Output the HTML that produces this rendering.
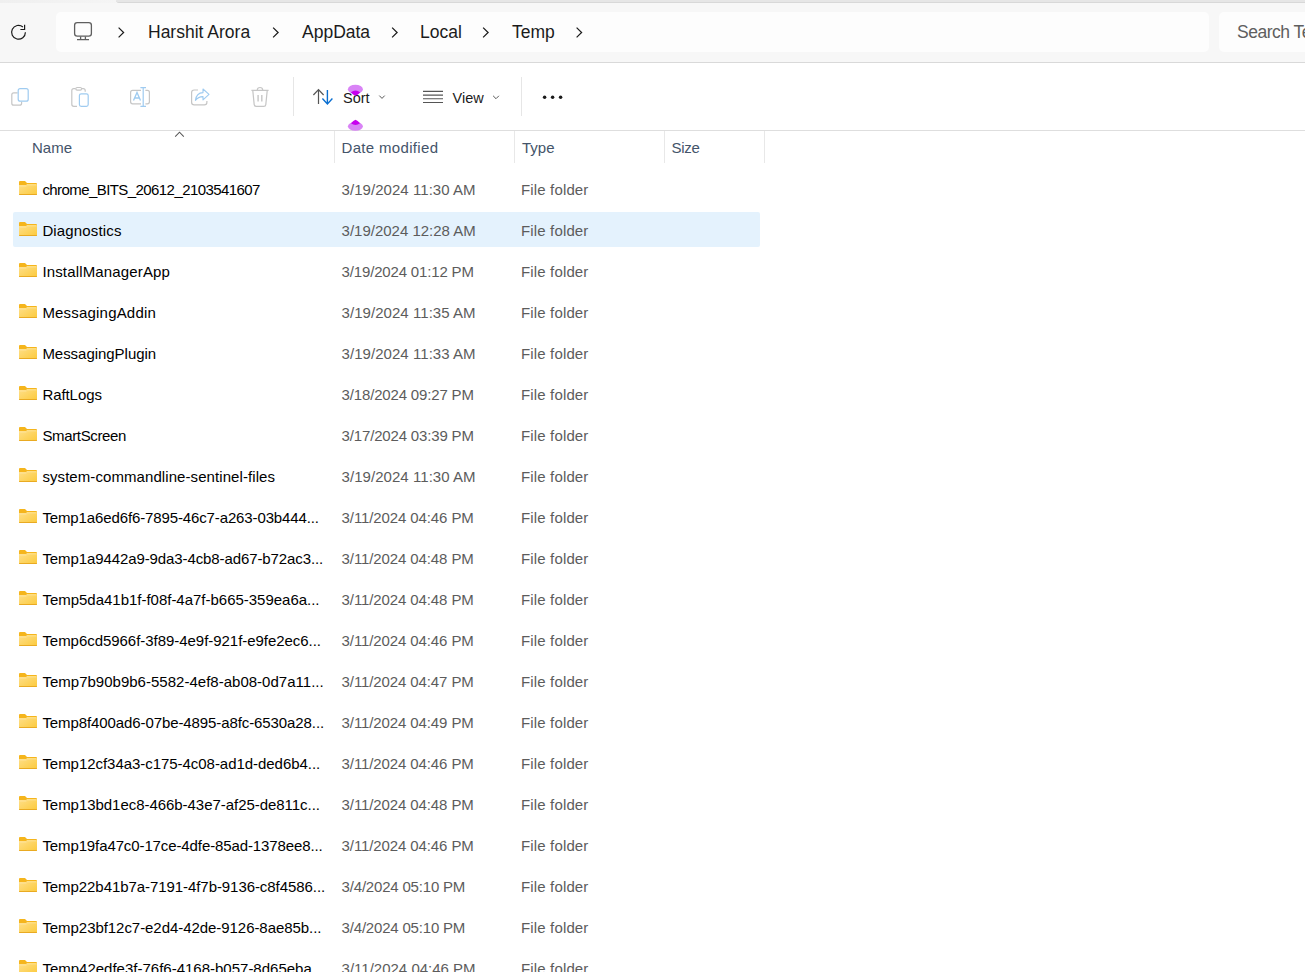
<!DOCTYPE html>
<html><head><meta charset="utf-8">
<style>
html,body{margin:0;padding:0;}
body{width:1305px;height:972px;overflow:hidden;position:relative;background:#fff;font-family:"Liberation Sans",sans-serif;}
.a{position:absolute;}
#hdrbg{left:0;top:0;width:1305px;height:62px;background:#f7f7f7;}
#tabl{left:0;top:0;width:116px;height:3px;background:linear-gradient(90deg,#efefef,#f5f5f5);}
#tabr{left:116px;top:0;width:1189px;height:2px;background:#e6e6e6;border-bottom:1px solid #d8d8d8;border-bottom-left-radius:4px;}
#line1{left:0;top:62px;width:1305px;height:1px;background:#d9d9d9;}
#line2{left:0;top:130px;width:1305px;height:1px;background:#dedede;}
#crumb{left:56px;top:12px;width:1153px;height:40px;background:#fdfdfd;border-radius:5px;}
#search{left:1219px;top:12px;width:120px;height:40px;background:#fdfdfd;border-radius:5px;}
.bc{position:absolute;top:21px;height:22px;line-height:22px;font-size:17.5px;color:#1b1b1b;white-space:nowrap;}
.sep{position:absolute;top:77px;width:1px;height:39px;background:#e6e6e6;}
.tb{position:absolute;top:88px;height:20px;line-height:20px;font-size:14.5px;color:#1b1b1b;white-space:nowrap;}
.hd{position:absolute;top:138px;height:20px;line-height:20px;font-size:15px;color:#44546a;white-space:nowrap;}
.cd{position:absolute;top:131px;width:1px;height:32px;background:#e8e8e8;}
.t{position:absolute;height:20px;line-height:20px;font-size:15px;white-space:nowrap;}
.nm{left:42.4px;color:#000;}
.dt{left:341.6px;color:#5c5c5c;}
.ty{left:521px;color:#5c5c5c;letter-spacing:0.15px;}
.ic{position:absolute;left:19px;width:18px;height:14px;}
.ic svg{display:block;}
svg{overflow:visible;}
</style></head><body>
<div class="a" id="hdrbg"></div>
<div class="a" id="tabl"></div>
<div class="a" id="tabr"></div>
<div class="a" id="crumb"></div>
<div class="a" id="search"></div>
<div class="a" id="line1"></div>
<div class="a" id="line2"></div>

<!-- refresh icon -->
<svg class="a" style="left:0;top:0" width="60" height="60">
  <path d="M25.4 32.25 A6.9 6.9 0 1 1 22.9 26.95" fill="none" stroke="#1a1a1a" stroke-width="1.2"/>
  <path d="M24.6 24.7 V29.5 H20.4" fill="none" stroke="#1a1a1a" stroke-width="1.2"/>
</svg>

<!-- monitor icon -->
<svg class="a" style="left:0;top:0" width="100" height="50">
  <rect x="74.6" y="22.6" width="16.8" height="13.6" rx="2.6" fill="none" stroke="#5f5f5f" stroke-width="1.3"/>
  <path d="M80.6 36.5 V39.3 M85.4 36.5 V39.3 M77 39.6 H89" fill="none" stroke="#5f5f5f" stroke-width="1.3"/>
</svg>

<!-- breadcrumb chevrons -->
<svg class="a" style="left:0;top:0" width="600" height="50">
  <g fill="none" stroke="#1b1b1b" stroke-width="1.25">
    <path d="M118.6 27.6 L123.6 32.5 L118.6 37.4"/>
    <path d="M273.1 27.6 L278.1 32.5 L273.1 37.4"/>
    <path d="M392.1 27.6 L397.1 32.5 L392.1 37.4"/>
    <path d="M483.1 27.6 L488.1 32.5 L483.1 37.4"/>
    <path d="M576.6 27.6 L581.6 32.5 L576.6 37.4"/>
  </g>
</svg>
<div class="bc" style="left:148px">Harshit Arora</div>
<div class="bc" style="left:302px">AppData</div>
<div class="bc" style="left:420px">Local</div>
<div class="bc" style="left:512px">Temp</div>
<div class="bc" style="left:1237px;color:#5f5f5f;letter-spacing:-0.5px">Search Temp</div>

<!-- toolbar icons -->
<svg class="a" style="left:0;top:0" width="600" height="130">
  <!-- copy -->
  <path d="M17.6 92.8 H13.8 Q11.8 92.8 11.8 94.8 V103.2 Q11.8 105.2 13.8 105.2 H19.6 Q21.6 105.2 21.6 103.2 V101.8" fill="none" stroke="#c6c6c6" stroke-width="1.2"/>
  <rect x="18.2" y="88.6" width="10" height="12.6" rx="2" fill="none" stroke="#9fcbf0" stroke-width="1.2"/>
  <!-- paste -->
  <path d="M77 106.3 H73.8 Q71.8 106.3 71.8 104.3 V90.6 Q71.8 88.6 73.8 88.6 H75.6 M81.6 88.6 H83.2 Q85.2 88.6 85.2 90.6 V91.8" fill="none" stroke="#c6c6c6" stroke-width="1.2"/>
  <rect x="75.8" y="87.5" width="5.8" height="2.6" rx="1.3" fill="none" stroke="#c6c6c6" stroke-width="1.1"/>
  <rect x="79.4" y="93.8" width="8.8" height="12.6" rx="1.8" fill="none" stroke="#9fcbf0" stroke-width="1.2"/>
  <!-- rename -->
  <path d="M141 90.4 H132.6 Q130.6 90.4 130.6 92.4 V101.8 Q130.6 103.8 132.6 103.8 H141 M145.4 90.4 H147.4 Q149.4 90.4 149.4 92.4 V101.8 Q149.4 103.8 147.4 103.8 H145.4" fill="none" stroke="#c6c6c6" stroke-width="1.2"/>
  <path d="M133.5 100.6 L137 92.4 L140.5 100.6 M134.6 98 H139.4" fill="none" stroke="#9fcbf0" stroke-width="1.3"/>
  <path d="M143.2 87.6 V106.4 M140.4 87.6 H146 M140.4 106.4 H146" fill="none" stroke="#9fcbf0" stroke-width="1.2"/>
  <!-- share -->
  <path d="M198 90 H194.2 Q191.6 90 191.6 92.6 V102.2 Q191.6 104.8 194.2 104.8 H204.3 Q206.9 104.8 206.9 102.2 V101" fill="none" stroke="#c6c6c6" stroke-width="1.2"/>
  <path d="M195.4 100.4 Q196.4 92.8 203 92.6 V89 L209 94.4 L203 99.8 V96.6 Q198.6 96.4 195.4 100.4 Z" fill="none" stroke="#9fcbf0" stroke-width="1.1" stroke-linejoin="round"/>
  <!-- trash -->
  <path d="M251.4 90.4 H268.6 M257.2 90.2 Q257.4 87.5 260 87.5 Q262.6 87.5 262.8 90.2 M252.8 90.6 L254.2 104.6 Q254.4 106.3 256.2 106.3 H263.8 Q265.6 106.3 265.8 104.6 L267.2 90.6 " fill="none" stroke="#c6c6c6" stroke-width="1.2"/>
  <path d="M258.1 95 V101.4 M261.8 95 V101.4" fill="none" stroke="#cacaca" stroke-width="1.5"/>
  <!-- sort arrows -->
  <path d="M318.5 104 V89.6 M313.4 95 L318.5 89.6 L323.6 95" fill="none" stroke="#555" stroke-width="1.2"/>
  <path d="M327.4 90 V103.9 M322.4 98.6 L327.4 103.9 L332.4 98.6" fill="none" stroke="#0a6fd1" stroke-width="1.4"/>
  <!-- sort chevron -->
  <path d="M379.3 95.6 L382 98.4 L384.7 95.6" fill="none" stroke="#5a5a5a" stroke-width="1"/>
  <!-- view icon -->
  <path d="M423 91.4 H443 M423 95.1 H443 M423 98.8 H443 M423 102.5 H443" fill="none" stroke="#555" stroke-width="1.1"/>
  <path d="M493.1 95.8 L496 98.7 L498.9 95.8" fill="none" stroke="#5a5a5a" stroke-width="1"/>
  <!-- more -->
  <circle cx="544.6" cy="97.2" r="1.75" fill="#1a1a1a"/>
  <circle cx="552.6" cy="97.2" r="1.75" fill="#1a1a1a"/>
  <circle cx="560.6" cy="97.2" r="1.75" fill="#1a1a1a"/>
</svg>
<div class="sep" style="left:293px"></div>
<div class="sep" style="left:521px"></div>
<div class="tb" style="left:343px">Sort</div>
<div class="tb" style="left:452.5px">View</div>

<!-- column headers -->
<div class="hd" style="left:32px">Name</div>
<div class="hd" style="left:341.5px;letter-spacing:0.33px">Date modified</div>
<div class="hd" style="left:522px">Type</div>
<div class="hd" style="left:671.5px;letter-spacing:-0.25px">Size</div>
<div class="cd" style="left:334px"></div>
<div class="cd" style="left:514px"></div>
<div class="cd" style="left:664px"></div>
<div class="cd" style="left:764px"></div>
<svg class="a" style="left:0;top:0" width="200" height="150">
  <path d="M175.2 136.6 L179.5 132.2 L183.8 136.6" fill="none" stroke="#555" stroke-width="1.05"/>
</svg>

<!-- selected row -->
<div class="a" style="left:13px;top:212px;width:747px;height:34.5px;background:#e4f2fd;border-radius:2px;"></div>

<div class="ic" style="top:181px"><svg width="18" height="14" viewBox="0 0 18 14"><defs><linearGradient id="fg" x1="0" y1="0" x2="1" y2="1"><stop offset="0" stop-color="#fedf8a"/><stop offset="1" stop-color="#fcca3c"/></linearGradient></defs><path d="M0 1 Q0 0 1 0 H6 L8 2 H17 Q18 2 18 3 V6 H0 Z" fill="#f5b51c"/><path d="M0 4 H7 L8 3 H17 Q18 3 18 4 V13 Q18 14 17 14 H1 Q0 14 0 13 Z" fill="url(#fg)"/><rect x="0.5" y="4.6" width="7" height="0.8" fill="#fee7a5"/><rect x="8" y="3.5" width="9.5" height="0.8" fill="#fee39a"/><rect x="0" y="12.9" width="18" height="1.1" rx="0.5" fill="#e9aa22"/></svg></div>
<div class="t nm" id="n0" style="top:180px;letter-spacing:-0.574px">chrome_BITS_20612_2103541607</div>
<div class="t dt" style="top:180px;letter-spacing:0.048px">3/19/2024 11:30 AM</div>
<div class="t ty" style="top:180px">File folder</div>
<div class="ic" style="top:222px"><svg width="18" height="14" viewBox="0 0 18 14"><defs><linearGradient id="fg" x1="0" y1="0" x2="1" y2="1"><stop offset="0" stop-color="#fedf8a"/><stop offset="1" stop-color="#fcca3c"/></linearGradient></defs><path d="M0 1 Q0 0 1 0 H6 L8 2 H17 Q18 2 18 3 V6 H0 Z" fill="#f5b51c"/><path d="M0 4 H7 L8 3 H17 Q18 3 18 4 V13 Q18 14 17 14 H1 Q0 14 0 13 Z" fill="url(#fg)"/><rect x="0.5" y="4.6" width="7" height="0.8" fill="#fee7a5"/><rect x="8" y="3.5" width="9.5" height="0.8" fill="#fee39a"/><rect x="0" y="12.9" width="18" height="1.1" rx="0.5" fill="#e9aa22"/></svg></div>
<div class="t nm" id="n1" style="top:221px;letter-spacing:0.15px">Diagnostics</div>
<div class="t dt" style="top:221px;letter-spacing:-0.011px">3/19/2024 12:28 AM</div>
<div class="t ty" style="top:221px">File folder</div>
<div class="ic" style="top:263px"><svg width="18" height="14" viewBox="0 0 18 14"><defs><linearGradient id="fg" x1="0" y1="0" x2="1" y2="1"><stop offset="0" stop-color="#fedf8a"/><stop offset="1" stop-color="#fcca3c"/></linearGradient></defs><path d="M0 1 Q0 0 1 0 H6 L8 2 H17 Q18 2 18 3 V6 H0 Z" fill="#f5b51c"/><path d="M0 4 H7 L8 3 H17 Q18 3 18 4 V13 Q18 14 17 14 H1 Q0 14 0 13 Z" fill="url(#fg)"/><rect x="0.5" y="4.6" width="7" height="0.8" fill="#fee7a5"/><rect x="8" y="3.5" width="9.5" height="0.8" fill="#fee39a"/><rect x="0" y="12.9" width="18" height="1.1" rx="0.5" fill="#e9aa22"/></svg></div>
<div class="t nm" id="n2" style="top:262px;letter-spacing:0.156px">InstallManagerApp</div>
<div class="t dt" style="top:262px;letter-spacing:-0.165px">3/19/2024 01:12 PM</div>
<div class="t ty" style="top:262px">File folder</div>
<div class="ic" style="top:304px"><svg width="18" height="14" viewBox="0 0 18 14"><defs><linearGradient id="fg" x1="0" y1="0" x2="1" y2="1"><stop offset="0" stop-color="#fedf8a"/><stop offset="1" stop-color="#fcca3c"/></linearGradient></defs><path d="M0 1 Q0 0 1 0 H6 L8 2 H17 Q18 2 18 3 V6 H0 Z" fill="#f5b51c"/><path d="M0 4 H7 L8 3 H17 Q18 3 18 4 V13 Q18 14 17 14 H1 Q0 14 0 13 Z" fill="url(#fg)"/><rect x="0.5" y="4.6" width="7" height="0.8" fill="#fee7a5"/><rect x="8" y="3.5" width="9.5" height="0.8" fill="#fee39a"/><rect x="0" y="12.9" width="18" height="1.1" rx="0.5" fill="#e9aa22"/></svg></div>
<div class="t nm" id="n3" style="top:303px;letter-spacing:0.193px">MessagingAddin</div>
<div class="t dt" style="top:303px;letter-spacing:0.047px">3/19/2024 11:35 AM</div>
<div class="t ty" style="top:303px">File folder</div>
<div class="ic" style="top:345px"><svg width="18" height="14" viewBox="0 0 18 14"><defs><linearGradient id="fg" x1="0" y1="0" x2="1" y2="1"><stop offset="0" stop-color="#fedf8a"/><stop offset="1" stop-color="#fcca3c"/></linearGradient></defs><path d="M0 1 Q0 0 1 0 H6 L8 2 H17 Q18 2 18 3 V6 H0 Z" fill="#f5b51c"/><path d="M0 4 H7 L8 3 H17 Q18 3 18 4 V13 Q18 14 17 14 H1 Q0 14 0 13 Z" fill="url(#fg)"/><rect x="0.5" y="4.6" width="7" height="0.8" fill="#fee7a5"/><rect x="8" y="3.5" width="9.5" height="0.8" fill="#fee39a"/><rect x="0" y="12.9" width="18" height="1.1" rx="0.5" fill="#e9aa22"/></svg></div>
<div class="t nm" id="n4" style="top:344px;letter-spacing:-0.035px">MessagingPlugin</div>
<div class="t dt" style="top:344px;letter-spacing:0.047px">3/19/2024 11:33 AM</div>
<div class="t ty" style="top:344px">File folder</div>
<div class="ic" style="top:386px"><svg width="18" height="14" viewBox="0 0 18 14"><defs><linearGradient id="fg" x1="0" y1="0" x2="1" y2="1"><stop offset="0" stop-color="#fedf8a"/><stop offset="1" stop-color="#fcca3c"/></linearGradient></defs><path d="M0 1 Q0 0 1 0 H6 L8 2 H17 Q18 2 18 3 V6 H0 Z" fill="#f5b51c"/><path d="M0 4 H7 L8 3 H17 Q18 3 18 4 V13 Q18 14 17 14 H1 Q0 14 0 13 Z" fill="url(#fg)"/><rect x="0.5" y="4.6" width="7" height="0.8" fill="#fee7a5"/><rect x="8" y="3.5" width="9.5" height="0.8" fill="#fee39a"/><rect x="0" y="12.9" width="18" height="1.1" rx="0.5" fill="#e9aa22"/></svg></div>
<div class="t nm" id="n5" style="top:385px;letter-spacing:-0.072px">RaftLogs</div>
<div class="t dt" style="top:385px;letter-spacing:-0.165px">3/18/2024 09:27 PM</div>
<div class="t ty" style="top:385px">File folder</div>
<div class="ic" style="top:427px"><svg width="18" height="14" viewBox="0 0 18 14"><defs><linearGradient id="fg" x1="0" y1="0" x2="1" y2="1"><stop offset="0" stop-color="#fedf8a"/><stop offset="1" stop-color="#fcca3c"/></linearGradient></defs><path d="M0 1 Q0 0 1 0 H6 L8 2 H17 Q18 2 18 3 V6 H0 Z" fill="#f5b51c"/><path d="M0 4 H7 L8 3 H17 Q18 3 18 4 V13 Q18 14 17 14 H1 Q0 14 0 13 Z" fill="url(#fg)"/><rect x="0.5" y="4.6" width="7" height="0.8" fill="#fee7a5"/><rect x="8" y="3.5" width="9.5" height="0.8" fill="#fee39a"/><rect x="0" y="12.9" width="18" height="1.1" rx="0.5" fill="#e9aa22"/></svg></div>
<div class="t nm" id="n6" style="top:426px;letter-spacing:-0.35px">SmartScreen</div>
<div class="t dt" style="top:426px;letter-spacing:-0.165px">3/17/2024 03:39 PM</div>
<div class="t ty" style="top:426px">File folder</div>
<div class="ic" style="top:468px"><svg width="18" height="14" viewBox="0 0 18 14"><defs><linearGradient id="fg" x1="0" y1="0" x2="1" y2="1"><stop offset="0" stop-color="#fedf8a"/><stop offset="1" stop-color="#fcca3c"/></linearGradient></defs><path d="M0 1 Q0 0 1 0 H6 L8 2 H17 Q18 2 18 3 V6 H0 Z" fill="#f5b51c"/><path d="M0 4 H7 L8 3 H17 Q18 3 18 4 V13 Q18 14 17 14 H1 Q0 14 0 13 Z" fill="url(#fg)"/><rect x="0.5" y="4.6" width="7" height="0.8" fill="#fee7a5"/><rect x="8" y="3.5" width="9.5" height="0.8" fill="#fee39a"/><rect x="0" y="12.9" width="18" height="1.1" rx="0.5" fill="#e9aa22"/></svg></div>
<div class="t nm" id="n7" style="top:467px;letter-spacing:0.079px">system-commandline-sentinel-files</div>
<div class="t dt" style="top:467px;letter-spacing:0.047px">3/19/2024 11:30 AM</div>
<div class="t ty" style="top:467px">File folder</div>
<div class="ic" style="top:509px"><svg width="18" height="14" viewBox="0 0 18 14"><defs><linearGradient id="fg" x1="0" y1="0" x2="1" y2="1"><stop offset="0" stop-color="#fedf8a"/><stop offset="1" stop-color="#fcca3c"/></linearGradient></defs><path d="M0 1 Q0 0 1 0 H6 L8 2 H17 Q18 2 18 3 V6 H0 Z" fill="#f5b51c"/><path d="M0 4 H7 L8 3 H17 Q18 3 18 4 V13 Q18 14 17 14 H1 Q0 14 0 13 Z" fill="url(#fg)"/><rect x="0.5" y="4.6" width="7" height="0.8" fill="#fee7a5"/><rect x="8" y="3.5" width="9.5" height="0.8" fill="#fee39a"/><rect x="0" y="12.9" width="18" height="1.1" rx="0.5" fill="#e9aa22"/></svg></div>
<div class="t nm" id="n8" style="top:508px;letter-spacing:-0.124px">Temp1a6ed6f6-7895-46c7-a263-03b444...</div>
<div class="t dt" style="top:508px;letter-spacing:-0.106px">3/11/2024 04:46 PM</div>
<div class="t ty" style="top:508px">File folder</div>
<div class="ic" style="top:550px"><svg width="18" height="14" viewBox="0 0 18 14"><defs><linearGradient id="fg" x1="0" y1="0" x2="1" y2="1"><stop offset="0" stop-color="#fedf8a"/><stop offset="1" stop-color="#fcca3c"/></linearGradient></defs><path d="M0 1 Q0 0 1 0 H6 L8 2 H17 Q18 2 18 3 V6 H0 Z" fill="#f5b51c"/><path d="M0 4 H7 L8 3 H17 Q18 3 18 4 V13 Q18 14 17 14 H1 Q0 14 0 13 Z" fill="url(#fg)"/><rect x="0.5" y="4.6" width="7" height="0.8" fill="#fee7a5"/><rect x="8" y="3.5" width="9.5" height="0.8" fill="#fee39a"/><rect x="0" y="12.9" width="18" height="1.1" rx="0.5" fill="#e9aa22"/></svg></div>
<div class="t nm" id="n9" style="top:549px;letter-spacing:-0.098px">Temp1a9442a9-9da3-4cb8-ad67-b72ac3...</div>
<div class="t dt" style="top:549px;letter-spacing:-0.106px">3/11/2024 04:48 PM</div>
<div class="t ty" style="top:549px">File folder</div>
<div class="ic" style="top:591px"><svg width="18" height="14" viewBox="0 0 18 14"><defs><linearGradient id="fg" x1="0" y1="0" x2="1" y2="1"><stop offset="0" stop-color="#fedf8a"/><stop offset="1" stop-color="#fcca3c"/></linearGradient></defs><path d="M0 1 Q0 0 1 0 H6 L8 2 H17 Q18 2 18 3 V6 H0 Z" fill="#f5b51c"/><path d="M0 4 H7 L8 3 H17 Q18 3 18 4 V13 Q18 14 17 14 H1 Q0 14 0 13 Z" fill="url(#fg)"/><rect x="0.5" y="4.6" width="7" height="0.8" fill="#fee7a5"/><rect x="8" y="3.5" width="9.5" height="0.8" fill="#fee39a"/><rect x="0" y="12.9" width="18" height="1.1" rx="0.5" fill="#e9aa22"/></svg></div>
<div class="t nm" id="n10" style="top:590px;letter-spacing:-0.015px">Temp5da41b1f-f08f-4a7f-b665-359ea6a...</div>
<div class="t dt" style="top:590px;letter-spacing:-0.106px">3/11/2024 04:48 PM</div>
<div class="t ty" style="top:590px">File folder</div>
<div class="ic" style="top:632px"><svg width="18" height="14" viewBox="0 0 18 14"><defs><linearGradient id="fg" x1="0" y1="0" x2="1" y2="1"><stop offset="0" stop-color="#fedf8a"/><stop offset="1" stop-color="#fcca3c"/></linearGradient></defs><path d="M0 1 Q0 0 1 0 H6 L8 2 H17 Q18 2 18 3 V6 H0 Z" fill="#f5b51c"/><path d="M0 4 H7 L8 3 H17 Q18 3 18 4 V13 Q18 14 17 14 H1 Q0 14 0 13 Z" fill="url(#fg)"/><rect x="0.5" y="4.6" width="7" height="0.8" fill="#fee7a5"/><rect x="8" y="3.5" width="9.5" height="0.8" fill="#fee39a"/><rect x="0" y="12.9" width="18" height="1.1" rx="0.5" fill="#e9aa22"/></svg></div>
<div class="t nm" id="n11" style="top:631px;letter-spacing:-0.041px">Temp6cd5966f-3f89-4e9f-921f-e9fe2ec6...</div>
<div class="t dt" style="top:631px;letter-spacing:-0.106px">3/11/2024 04:46 PM</div>
<div class="t ty" style="top:631px">File folder</div>
<div class="ic" style="top:673px"><svg width="18" height="14" viewBox="0 0 18 14"><defs><linearGradient id="fg" x1="0" y1="0" x2="1" y2="1"><stop offset="0" stop-color="#fedf8a"/><stop offset="1" stop-color="#fcca3c"/></linearGradient></defs><path d="M0 1 Q0 0 1 0 H6 L8 2 H17 Q18 2 18 3 V6 H0 Z" fill="#f5b51c"/><path d="M0 4 H7 L8 3 H17 Q18 3 18 4 V13 Q18 14 17 14 H1 Q0 14 0 13 Z" fill="url(#fg)"/><rect x="0.5" y="4.6" width="7" height="0.8" fill="#fee7a5"/><rect x="8" y="3.5" width="9.5" height="0.8" fill="#fee39a"/><rect x="0" y="12.9" width="18" height="1.1" rx="0.5" fill="#e9aa22"/></svg></div>
<div class="t nm" id="n12" style="top:672px;letter-spacing:0.014px">Temp7b90b9b6-5582-4ef8-ab08-0d7a11...</div>
<div class="t dt" style="top:672px;letter-spacing:-0.106px">3/11/2024 04:47 PM</div>
<div class="t ty" style="top:672px">File folder</div>
<div class="ic" style="top:714px"><svg width="18" height="14" viewBox="0 0 18 14"><defs><linearGradient id="fg" x1="0" y1="0" x2="1" y2="1"><stop offset="0" stop-color="#fedf8a"/><stop offset="1" stop-color="#fcca3c"/></linearGradient></defs><path d="M0 1 Q0 0 1 0 H6 L8 2 H17 Q18 2 18 3 V6 H0 Z" fill="#f5b51c"/><path d="M0 4 H7 L8 3 H17 Q18 3 18 4 V13 Q18 14 17 14 H1 Q0 14 0 13 Z" fill="url(#fg)"/><rect x="0.5" y="4.6" width="7" height="0.8" fill="#fee7a5"/><rect x="8" y="3.5" width="9.5" height="0.8" fill="#fee39a"/><rect x="0" y="12.9" width="18" height="1.1" rx="0.5" fill="#e9aa22"/></svg></div>
<div class="t nm" id="n13" style="top:713px;letter-spacing:-0.094px">Temp8f400ad6-07be-4895-a8fc-6530a28...</div>
<div class="t dt" style="top:713px;letter-spacing:-0.106px">3/11/2024 04:49 PM</div>
<div class="t ty" style="top:713px">File folder</div>
<div class="ic" style="top:755px"><svg width="18" height="14" viewBox="0 0 18 14"><defs><linearGradient id="fg" x1="0" y1="0" x2="1" y2="1"><stop offset="0" stop-color="#fedf8a"/><stop offset="1" stop-color="#fcca3c"/></linearGradient></defs><path d="M0 1 Q0 0 1 0 H6 L8 2 H17 Q18 2 18 3 V6 H0 Z" fill="#f5b51c"/><path d="M0 4 H7 L8 3 H17 Q18 3 18 4 V13 Q18 14 17 14 H1 Q0 14 0 13 Z" fill="url(#fg)"/><rect x="0.5" y="4.6" width="7" height="0.8" fill="#fee7a5"/><rect x="8" y="3.5" width="9.5" height="0.8" fill="#fee39a"/><rect x="0" y="12.9" width="18" height="1.1" rx="0.5" fill="#e9aa22"/></svg></div>
<div class="t nm" id="n14" style="top:754px;letter-spacing:-0.042px">Temp12cf34a3-c175-4c08-ad1d-ded6b4...</div>
<div class="t dt" style="top:754px;letter-spacing:-0.106px">3/11/2024 04:46 PM</div>
<div class="t ty" style="top:754px">File folder</div>
<div class="ic" style="top:796px"><svg width="18" height="14" viewBox="0 0 18 14"><defs><linearGradient id="fg" x1="0" y1="0" x2="1" y2="1"><stop offset="0" stop-color="#fedf8a"/><stop offset="1" stop-color="#fcca3c"/></linearGradient></defs><path d="M0 1 Q0 0 1 0 H6 L8 2 H17 Q18 2 18 3 V6 H0 Z" fill="#f5b51c"/><path d="M0 4 H7 L8 3 H17 Q18 3 18 4 V13 Q18 14 17 14 H1 Q0 14 0 13 Z" fill="url(#fg)"/><rect x="0.5" y="4.6" width="7" height="0.8" fill="#fee7a5"/><rect x="8" y="3.5" width="9.5" height="0.8" fill="#fee39a"/><rect x="0" y="12.9" width="18" height="1.1" rx="0.5" fill="#e9aa22"/></svg></div>
<div class="t nm" id="n15" style="top:795px;letter-spacing:-0.042px">Temp13bd1ec8-466b-43e7-af25-de811c...</div>
<div class="t dt" style="top:795px;letter-spacing:-0.106px">3/11/2024 04:48 PM</div>
<div class="t ty" style="top:795px">File folder</div>
<div class="ic" style="top:837px"><svg width="18" height="14" viewBox="0 0 18 14"><defs><linearGradient id="fg" x1="0" y1="0" x2="1" y2="1"><stop offset="0" stop-color="#fedf8a"/><stop offset="1" stop-color="#fcca3c"/></linearGradient></defs><path d="M0 1 Q0 0 1 0 H6 L8 2 H17 Q18 2 18 3 V6 H0 Z" fill="#f5b51c"/><path d="M0 4 H7 L8 3 H17 Q18 3 18 4 V13 Q18 14 17 14 H1 Q0 14 0 13 Z" fill="url(#fg)"/><rect x="0.5" y="4.6" width="7" height="0.8" fill="#fee7a5"/><rect x="8" y="3.5" width="9.5" height="0.8" fill="#fee39a"/><rect x="0" y="12.9" width="18" height="1.1" rx="0.5" fill="#e9aa22"/></svg></div>
<div class="t nm" id="n16" style="top:836px;letter-spacing:-0.108px">Temp19fa47c0-17ce-4dfe-85ad-1378ee8...</div>
<div class="t dt" style="top:836px;letter-spacing:-0.106px">3/11/2024 04:46 PM</div>
<div class="t ty" style="top:836px">File folder</div>
<div class="ic" style="top:878px"><svg width="18" height="14" viewBox="0 0 18 14"><defs><linearGradient id="fg" x1="0" y1="0" x2="1" y2="1"><stop offset="0" stop-color="#fedf8a"/><stop offset="1" stop-color="#fcca3c"/></linearGradient></defs><path d="M0 1 Q0 0 1 0 H6 L8 2 H17 Q18 2 18 3 V6 H0 Z" fill="#f5b51c"/><path d="M0 4 H7 L8 3 H17 Q18 3 18 4 V13 Q18 14 17 14 H1 Q0 14 0 13 Z" fill="url(#fg)"/><rect x="0.5" y="4.6" width="7" height="0.8" fill="#fee7a5"/><rect x="8" y="3.5" width="9.5" height="0.8" fill="#fee39a"/><rect x="0" y="12.9" width="18" height="1.1" rx="0.5" fill="#e9aa22"/></svg></div>
<div class="t nm" id="n17" style="top:877px;letter-spacing:-0.066px">Temp22b41b7a-7191-4f7b-9136-c8f4586...</div>
<div class="t dt" style="top:877px;letter-spacing:-0.187px">3/4/2024 05:10 PM</div>
<div class="t ty" style="top:877px">File folder</div>
<div class="ic" style="top:919px"><svg width="18" height="14" viewBox="0 0 18 14"><defs><linearGradient id="fg" x1="0" y1="0" x2="1" y2="1"><stop offset="0" stop-color="#fedf8a"/><stop offset="1" stop-color="#fcca3c"/></linearGradient></defs><path d="M0 1 Q0 0 1 0 H6 L8 2 H17 Q18 2 18 3 V6 H0 Z" fill="#f5b51c"/><path d="M0 4 H7 L8 3 H17 Q18 3 18 4 V13 Q18 14 17 14 H1 Q0 14 0 13 Z" fill="url(#fg)"/><rect x="0.5" y="4.6" width="7" height="0.8" fill="#fee7a5"/><rect x="8" y="3.5" width="9.5" height="0.8" fill="#fee39a"/><rect x="0" y="12.9" width="18" height="1.1" rx="0.5" fill="#e9aa22"/></svg></div>
<div class="t nm" id="n18" style="top:918px;letter-spacing:-0.054px">Temp23bf12c7-e2d4-42de-9126-8ae85b...</div>
<div class="t dt" style="top:918px;letter-spacing:-0.187px">3/4/2024 05:10 PM</div>
<div class="t ty" style="top:918px">File folder</div>
<div class="ic" style="top:960px"><svg width="18" height="14" viewBox="0 0 18 14"><defs><linearGradient id="fg" x1="0" y1="0" x2="1" y2="1"><stop offset="0" stop-color="#fedf8a"/><stop offset="1" stop-color="#fcca3c"/></linearGradient></defs><path d="M0 1 Q0 0 1 0 H6 L8 2 H17 Q18 2 18 3 V6 H0 Z" fill="#f5b51c"/><path d="M0 4 H7 L8 3 H17 Q18 3 18 4 V13 Q18 14 17 14 H1 Q0 14 0 13 Z" fill="url(#fg)"/><rect x="0.5" y="4.6" width="7" height="0.8" fill="#fee7a5"/><rect x="8" y="3.5" width="9.5" height="0.8" fill="#fee39a"/><rect x="0" y="12.9" width="18" height="1.1" rx="0.5" fill="#e9aa22"/></svg></div>
<div class="t nm" id="n19" style="top:959px;letter-spacing:0px">Temp42edfe3f-76f6-4168-b057-8d65eba...</div>
<div class="t dt" style="top:959px;letter-spacing:0px">3/11/2024 04:46 PM</div>
<div class="t ty" style="top:959px">File folder</div>

<!-- purple markers -->
<svg class="a" style="left:0;top:0" width="400" height="140">
  <ellipse cx="355.4" cy="89.3" rx="7.5" ry="4.6" fill="#d983f6"/>
  <path d="M350.8 92.6 Q355.5 88.6 360.2 92.6 Q357.6 95.2 355.5 95.8 Q353.4 95.2 350.8 92.6 Z" fill="#c800ef"/>
  <ellipse cx="355.4" cy="126.3" rx="7.5" ry="4.4" fill="#d983f6"/>
  <path d="M350.9 123.2 Q355.5 126.8 360.1 123.2 Q357.6 120.6 355.5 119.8 Q353.4 120.6 350.9 123.2 Z" fill="#c800ef"/>
</svg>
</body></html>
